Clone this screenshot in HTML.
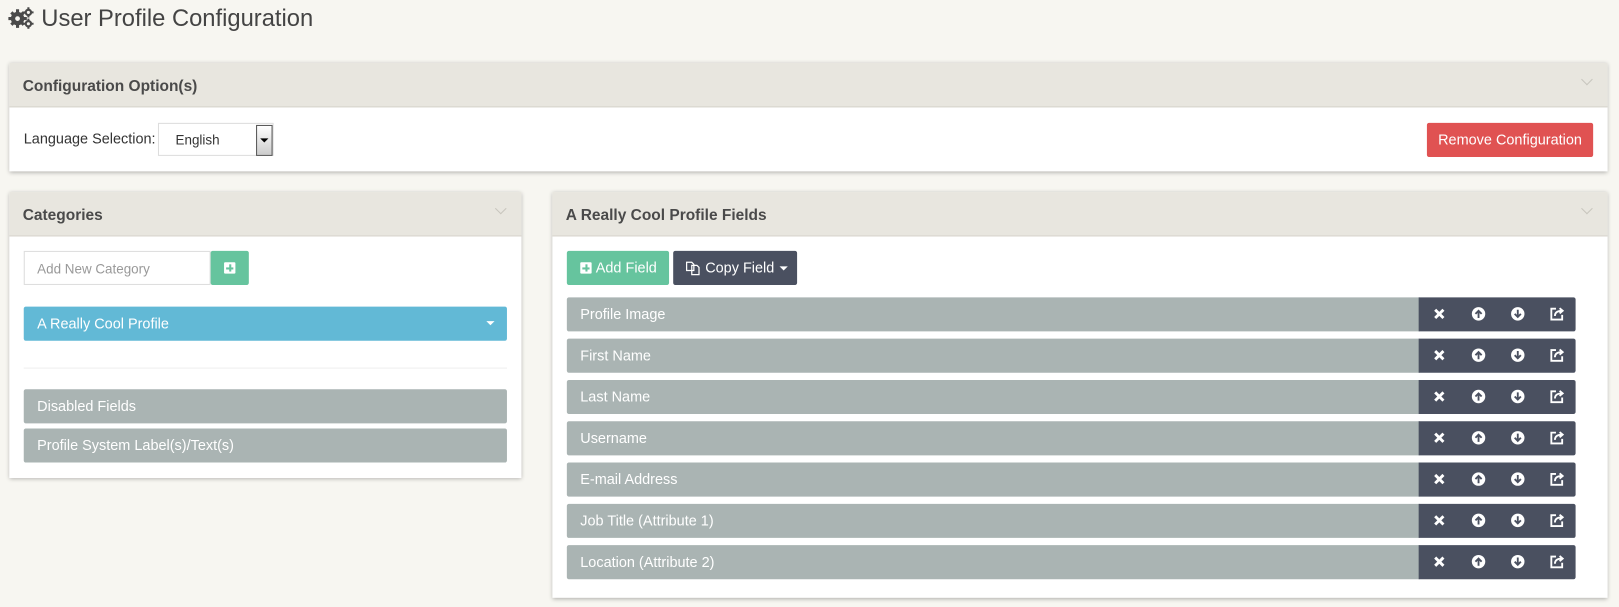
<!DOCTYPE html>
<html><head><style>
*{box-sizing:border-box;margin:0;padding:0}
html,body{width:1619px;height:607px;overflow:hidden;background:#f7f6f1}
#w{width:1568px;height:588px;background:#f7f6f1;font-family:"Liberation Sans",Arial,sans-serif;font-size:14px;color:#333;position:relative;transform:scale(1.0325);transform-origin:0 0}
.abs{position:absolute}
.panel{position:absolute;background:#fff;box-shadow:0 1px 4px rgba(0,0,0,.3)}
.ph{height:43px;background:#e8e6df;border-bottom:1px solid #d6d4cc;font-weight:bold;font-size:15px;color:#4a4a4a;padding:14px 13px;position:relative}
.ph .chev{position:absolute;right:16px;top:12px;width:8px;height:8px;border-right:1px solid #c8c6be;border-bottom:1px solid #c8c6be;transform:rotate(45deg)}
.bar{position:absolute;height:33px;color:#fff;font-size:14px;line-height:33px;padding-left:13px;border-radius:2px}
.gray{background:#aab4b3}
.act{position:absolute;height:33px;width:152px;background:#4a5060;border-radius:0 2px 2px 0}
.act svg{position:absolute;top:9px}
</style></head><body><div id="w">
<svg class="abs" style="left:8px;top:6px" width="26" height="22" viewBox="0 0 26 22">
<g fill="#4a4a4a"><circle cx="9" cy="12" r="6.5"/><circle cx="19.5" cy="6" r="3.6"/><circle cx="19.5" cy="17" r="3.6"/>
<g stroke="#4a4a4a" stroke-width="3"><path d="M9 3v18M0 12h18M3 6l12 12M15 6L3 18"/></g>
<g stroke="#4a4a4a" stroke-width="2"><path d="M19.5 1v10M14.5 6h10M19.5 12v10M14.5 17h10"/></g></g>
<circle cx="9" cy="12" r="2.3" fill="#f7f6f1"/><circle cx="19.5" cy="6" r="1.5" fill="#f7f6f1"/><circle cx="19.5" cy="17" r="1.5" fill="#f7f6f1"/></svg>
<div class="abs" style="left:40px;top:4px;font-size:23px;color:#444">User Profile Configuration</div>

<div class="panel" style="left:9px;top:61px;width:1548px;height:105px">
<div class="ph">Configuration Option(s)<span class="chev"></span></div>
<div class="abs" style="left:14px;top:65px;color:#333">Language Selection:</div>
<div class="abs" style="left:144px;top:58px;width:112px;height:32px;border:1px solid #ddd;font-size:13px;padding:8px 0 0 16px">English
<div class="abs" style="right:0;top:1px;width:16px;height:30px;border:1px solid #555;background:linear-gradient(#fff,#ccc)"><div class="abs" style="left:3px;top:12px;border:4px solid transparent;border-top:4px solid #000"></div></div></div>
<div class="abs" style="left:1373px;top:58px;width:161px;height:33px;background:#e05252;color:#fff;border-radius:2px;text-align:center;line-height:33px">Remove Configuration</div>
</div>

<div class="panel" style="left:9px;top:186px;width:496px;height:277px">
<div class="ph">Categories<span class="chev"></span></div>
<div class="abs" style="left:14px;top:57px;width:181px;height:33px;border:1px solid #ddd;color:#999;font-size:13px;padding:9px 12px">Add New Category</div>
<div class="abs" style="left:195px;top:57px;width:37px;height:33px;background:#66c49e;border-radius:2px"><div class="abs" style="left:13px;top:11px;width:11px;height:11px;background:#fff;border-radius:1px"></div><div class="abs" style="left:15px;top:16px;width:7px;height:2px;background:#66c49e"></div><div class="abs" style="left:17.5px;top:13px;width:2px;height:7px;background:#66c49e"></div></div>
<div class="bar" style="left:14px;top:111px;width:468px;background:#62b9d6">A Really Cool Profile<div class="abs" style="right:12px;top:14px;border:4px solid transparent;border-top:4px solid #fff"></div></div>
<div class="abs" style="left:14px;top:170px;width:468px;height:1px;background:#eee"></div>
<div class="bar gray" style="left:14px;top:191px;width:468px">Disabled Fields</div>
<div class="bar gray" style="left:14px;top:229px;width:468px">Profile System Label(s)/Text(s)</div>
</div>

<div class="panel" style="left:535px;top:186px;width:1022px;height:393px">
<div class="ph">A Really Cool Profile Fields<span class="chev"></span></div>
<div class="abs" style="left:14px;top:57px;width:99px;height:33px;background:#66c49e;color:#fff;border-radius:2px;line-height:33px;padding-left:28px">Add Field<div class="abs" style="left:13px;top:11px;width:11px;height:11px;background:#fff;border-radius:1px"></div><div class="abs" style="left:15px;top:16px;width:7px;height:2px;background:#66c49e"></div><div class="abs" style="left:17.5px;top:13px;width:2px;height:7px;background:#66c49e"></div></div>
<div class="abs" style="left:117px;top:57px;width:120px;height:33px;background:#4a5060;color:#fff;border-radius:2px;line-height:33px;padding-left:31px">Copy Field
<svg class="abs" style="left:12px;top:10px" width="15" height="14" viewBox="0 0 15 14" fill="none" stroke="#fff" stroke-width="1.2"><path d="M1 1h5l2 2v6H1z"/><path d="M6 4h5l2 2v7H6z"/></svg>
<div class="abs" style="left:103px;top:15px;border:4px solid transparent;border-top:4px solid #fff"></div></div>
</div>
<div id="rows"></div>
</div>
<script>
var n=["Profile Image","First Name","Last Name","Username","E-mail Address","Job Title (Attribute 1)","Location (Attribute 2)"],h="";
var ic='<svg style="left:13px" width="14" height="14" viewBox="0 0 14 14"><path d="M3 3l8 8M11 3l-8 8" stroke="#fff" stroke-width="2.8"/></svg>'+
'<svg style="left:51px" width="14" height="14" viewBox="0 0 14 14"><circle cx="7" cy="7" r="6.5" fill="#fff"/><path d="M7 11V4M4 7l3-3 3 3" stroke="#4a5060" stroke-width="1.8" fill="none"/></svg>'+
'<svg style="left:89px" width="14" height="14" viewBox="0 0 14 14"><circle cx="7" cy="7" r="6.5" fill="#fff"/><path d="M7 3v7M4 7l3 3 3-3" stroke="#4a5060" stroke-width="1.8" fill="none"/></svg>'+
'<svg style="left:127px" width="14" height="14" viewBox="0 0 14 14" fill="none" stroke="#fff" stroke-width="1.8"><path d="M6 2H1.5v10.5h10.5V8"/><path d="M5 9c0-4 3-5 7-5M9.5 1.5L12.5 4 9.5 6.5"/></svg>';
for(var i=0;i<7;i++){var y=288+40*i;h+='<div class="bar gray" style="left:549px;top:'+y+'px;width:826px;border-radius:2px 0 0 2px">'+n[i]+'</div><div class="act" style="left:1374px;top:'+y+'px">'+ic+'</div>';}
document.getElementById("rows").innerHTML=h;
</script>
</body></html>
